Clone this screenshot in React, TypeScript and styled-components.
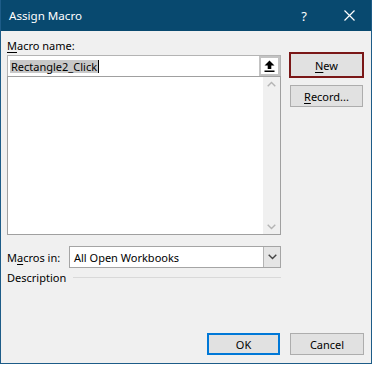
import styled, { createGlobalStyle } from "styled-components";

const GlobalStyle = createGlobalStyle`
  html, body {
    margin: 0;
    padding: 0;
    background: #ffffff;
  }
  body {
    font-family: "Noto Sans", "DejaVu Sans", sans-serif;
    font-size: 11px;
    color: #000000;
  }
`;

const Window = styled.div`
  width: 372px;
  height: 364px;
  box-sizing: border-box;
  display: flex;
  flex-direction: column;
  background: #f0f0f0;
  border: 1px solid #1d5c88;
  border-top: none;
`;

const TitleBar = styled.div`
  height: 31px;
  flex-shrink: 0;
  display: flex;
  align-items: center;
  background: #08496f;
  color: #ffffff;
  padding-left: 8px;
`;

const Title = styled.div`
  flex: 1;
  font-size: 11.6px;
`;

const TitleButton = styled.div<{ $w: number }>`
  width: ${(p) => p.$w}px;
  height: 31px;
  display: flex;
  align-items: center;
  justify-content: center;
  font-size: 13px;
`;

const Body = styled.div`
  flex: 1;
  display: flex;
  flex-direction: column;
  padding: 6px 7px 8px 6px;
`;

const Main = styled.div`
  display: flex;
  gap: 8px;
`;

const LeftCol = styled.div`
  width: 274px;
  display: flex;
  flex-direction: column;
`;

const RightCol = styled.div`
  width: 75px;
  display: flex;
  flex-direction: column;
  align-items: center;
  padding-top: 15px;
`;

const Label = styled.div`
  height: 18px;
  line-height: 18px;
  white-space: nowrap;
`;

const NameField = styled.div`
  height: 20px;
  display: flex;
  background: #ffffff;
  border: 1px solid #b4b4b4;
  border-bottom: none;
`;

const NameText = styled.div`
  flex: 1;
  display: flex;
  align-items: center;
  padding-left: 2px;
`;

const Selected = styled.span`
  background: #c8c8c8;
  line-height: 13px;
  padding: 0 1px;
  border-right: 1px solid #000;
`;

const UploadButton = styled.div`
  width: 17px;
  height: 16px;
  margin: 0 0 2px 0;
  border: 2px solid #c3c3c3;
  background: #ffffff;
  display: flex;
  align-items: center;
  justify-content: center;
`;

const ListBox = styled.div`
  height: 157px;
  display: flex;
  background: #ffffff;
  border: 1px solid #a0a0a0;
`;

const ListBody = styled.div`
  flex: 1;
`;

const ScrollBar = styled.div`
  width: 17px;
  background: #f0f0f0;
  display: flex;
  flex-direction: column;
  justify-content: space-between;
  align-items: center;
  padding: 4px 0;
`;

const MacrosRow = styled.div`
  display: flex;
  align-items: center;
  margin-top: 11px;
`;

const RowLabel = styled.div`
  width: 62px;
`;

const Combo = styled.div`
  flex: 1;
  height: 20px;
  display: flex;
  background: #ffffff;
  border: 1px solid #a5a5a5;
`;

const ComboText = styled.div`
  flex: 1;
  display: flex;
  align-items: center;
  padding-left: 4px;
`;

const ComboButton = styled.div`
  width: 16px;
  background: #e5e5e5;
  border-left: 1px solid #b4b4b4;
  display: flex;
  align-items: center;
  justify-content: center;
`;

const DescriptionRow = styled.div`
  display: flex;
  align-items: center;
  gap: 7px;
  height: 18px;
  margin-top: 0;
`;

const Rule = styled.div`
  flex: 1;
  height: 1px;
  background: #d9d9d9;
`;

const Button = styled.div<{ $border?: string; $width?: number }>`
  width: ${(p) => p.$width ?? 73}px;
  height: 22px;
  box-sizing: border-box;
  display: flex;
  align-items: center;
  justify-content: center;
  background: #e1e1e1;
  border: ${(p) => p.$border ?? "1px solid #adadad"};
`;

const DefaultButton = styled(Button)`
  height: 26px;
  margin-bottom: 7px;
`;

const Footer = styled.div`
  margin-top: auto;
  display: flex;
  justify-content: flex-end;
  gap: 10px;
`;

const U = styled.span`
  text-decoration: underline;
  text-underline-offset: 2px;
`;

const Chevron = ({ up, color }: { up?: boolean; color: string }) => (
  <svg width="9" height="6" viewBox="0 0 9 6">
    <path
      d={up ? "M0.7 5.2 L4.5 1.4 L8.3 5.2" : "M0.7 0.8 L4.5 4.6 L8.3 0.8"}
      fill="none"
      stroke={color}
      strokeWidth="1.4"
    />
  </svg>
);

const App = () => {
  return (
    <>
      <GlobalStyle />
      <Window>
        <TitleBar>
          <Title>Assign Macro</Title>
          <TitleButton $w={46}>?</TitleButton>
          <TitleButton $w={44}>
            <svg width="11" height="11" viewBox="0 0 11 11">
              <path d="M0.5 0.5 L10.5 10.5 M10.5 0.5 L0.5 10.5" stroke="#fff" strokeWidth="1.2" />
            </svg>
          </TitleButton>
        </TitleBar>
        <Body>
          <Main>
            <LeftCol>
              <Label>
                <U>M</U>acro name:
              </Label>
              <NameField>
                <NameText>
                  <Selected>Rectangle2_Click</Selected>
                </NameText>
                <UploadButton>
                  <svg width="11" height="12" viewBox="0 0 11 12">
                    <path d="M5.5 0.5 L10.5 5.5 L7.3 5.5 L7.3 9 L3.7 9 L3.7 5.5 L0.5 5.5 Z" fill="#000" />
                    <rect x="0.5" y="10.5" width="10" height="1.5" fill="#000" />
                  </svg>
                </UploadButton>
              </NameField>
              <ListBox>
                <ListBody />
                <ScrollBar>
                  <Chevron up color="#b4b4b4" />
                  <Chevron color="#b4b4b4" />
                </ScrollBar>
              </ListBox>
              <MacrosRow>
                <RowLabel>
                  M<U>a</U>cros in:
                </RowLabel>
                <Combo>
                  <ComboText>All Open Workbooks</ComboText>
                  <ComboButton>
                    <Chevron color="#444" />
                  </ComboButton>
                </Combo>
              </MacrosRow>
              <DescriptionRow>
                <div>Description</div>
                <Rule />
              </DescriptionRow>
            </LeftCol>
            <RightCol>
              <DefaultButton $width={75} $border="2px solid #7a1717">
                <span>
                  <U>N</U>ew
                </span>
              </DefaultButton>
              <Button>
                <span>
                  <U>R</U>ecord...
                </span>
              </Button>
            </RightCol>
          </Main>
          <Footer>
            <Button $width={73} $border="2px solid #0078d7">
              OK
            </Button>
            <Button $width={74}>Cancel</Button>
          </Footer>
        </Body>
      </Window>
    </>
  );
};

export default App;
